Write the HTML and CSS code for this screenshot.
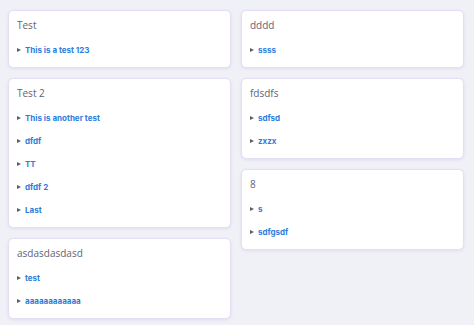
FILE: index.html
```html
<!DOCTYPE html>
<html lang="en">

<head>
    <meta charset="UTF-8">
    <meta name="viewport" content="width=device-width, initial-scale=1.0">
    <title>Notes</title>
    <link rel="stylesheet" href="styles.css">
</head>

<body>
    <div class="board">
        <div class="column">
            <div class="card">
                <p class="card-title">Test</p>
                <details class="item"><summary>This is a test 123</summary></details>
            </div>
            <div class="card">
                <p class="card-title">Test 2</p>
                <details class="item"><summary>This is another test</summary></details>
                <details class="item"><summary>dfdf</summary></details>
                <details class="item"><summary>TT</summary></details>
                <details class="item"><summary>dfdf 2</summary></details>
                <details class="item"><summary>Last</summary></details>
            </div>
            <div class="card">
                <p class="card-title">asdasdasdasd</p>
                <details class="item"><summary>test</summary></details>
                <details class="item"><summary>aaaaaaaaaaaa</summary></details>
            </div>
        </div>

        <div class="column">
            <div class="card">
                <p class="card-title">dddd</p>
                <details class="item"><summary>ssss</summary></details>
            </div>
            <div class="card">
                <p class="card-title">fdsdfs</p>
                <details class="item"><summary>sdfsd</summary></details>
                <details class="item"><summary>zxzx</summary></details>
            </div>
            <div class="card">
                <p class="card-title">8</p>
                <details class="item"><summary>s</summary></details>
                <details class="item"><summary>sdfgsdf</summary></details>
            </div>
        </div>
    </div>
</body>

</html>
```

FILE: styles.css
```css
html,
body {
    margin: 0;
    height: 100%;
}

body {
    background-color: #f0f0f7;
    font-family: "Open Sans", "DejaVu Sans", sans-serif;
}

.board {
    display: grid;
    grid-template-columns: 223px 223px;
    column-gap: 10px;
    padding: 10px 10px 0 8px;
    align-items: start;
}

.column {
    display: flex;
    flex-direction: column;
    gap: 10px;
}

.card {
    background-color: white;
    border: 1px solid #e4ddf4;
    border-radius: 5px;
    box-shadow: 0px 1px 3px rgba(120, 100, 180, 0.12);
    padding: 6px 8px 6px;
}

.card-title {
    margin: 0 0 5px 0;
    font-size: 10px;
    line-height: 16px;
    color: #5f6477;
}

.item summary {
    list-style: none;
    display: flex;
    align-items: center;
    gap: 4px;
    height: 23px;
    font-family: Inter, "Open Sans", sans-serif;
    font-size: 8px;
    font-weight: 700;
    color: #2c7ddb;
    cursor: pointer;
}

.item summary::-webkit-details-marker {
    display: none;
}

.item summary::before {
    content: "";
    border-left: 4px solid #5a5e6b;
    border-top: 2.5px solid transparent;
    border-bottom: 2.5px solid transparent;
}
```
